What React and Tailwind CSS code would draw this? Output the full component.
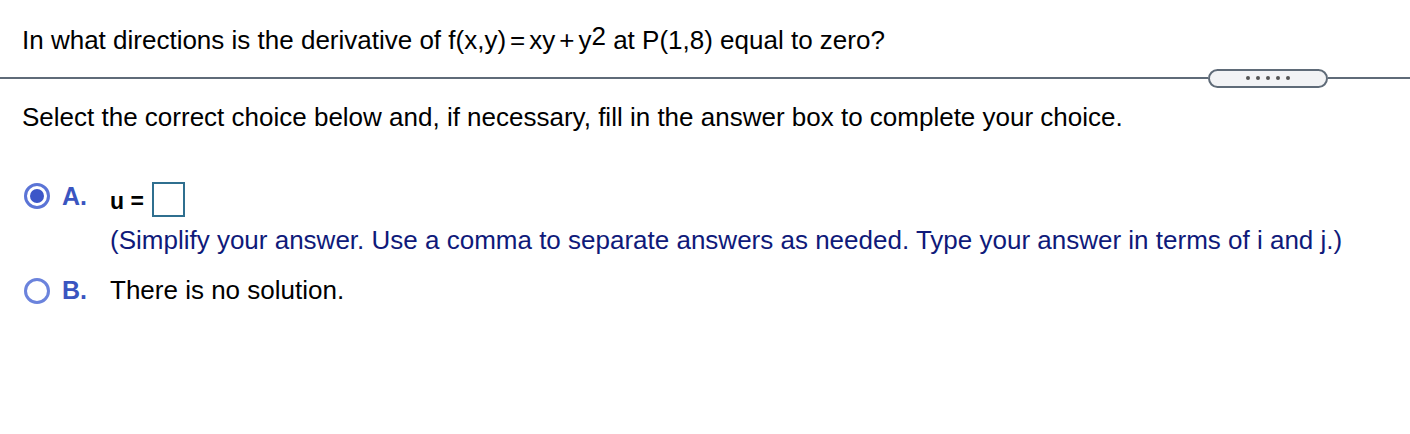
export default function App() {
  const font = { fontFamily: '"Liberation Sans", Arial, sans-serif' };
  return (
    <div className="w-[1410px] h-[434px] bg-white text-black overflow-hidden" style={font}>
      <div className="pl-[22px] pt-[25px] h-[68px] text-[26px] leading-[30px]">
        In what directions is the derivative of f(x,y)<span className="mx-[4px]">=</span>xy<span className="mx-[4px]">+</span>y<sup className="text-[26px] relative top-[-4px]">2</sup> at P(1,8) equal to zero?
      </div>
      <div className="flex items-center h-[20px]">
        <div className="flex-1 h-[2px] bg-[#5f6b78]" />
        <div className="w-[120px] h-[19px] rounded-full border-2 border-[#5f6b78] bg-[#f2f3f5] flex items-center justify-center gap-[6px]">
          <span className="w-[4px] h-[4px] rounded-full bg-[#555]" />
          <span className="w-[4px] h-[4px] rounded-full bg-[#555]" />
          <span className="w-[4px] h-[4px] rounded-full bg-[#555]" />
          <span className="w-[4px] h-[4px] rounded-full bg-[#555]" />
          <span className="w-[4px] h-[4px] rounded-full bg-[#555]" />
        </div>
        <div className="w-[82px] h-[2px] bg-[#5f6b78]" />
      </div>
      <div className="pl-[22px] mt-[14px] text-[26px] leading-[30px]">
        Select the correct choice below and, if necessary, fill in the answer box to complete your choice.
      </div>
      <div className="pl-[24px] mt-[51px] flex items-start">
        <div className="w-[26px] h-[26px] rounded-full border-[3px] border-[#5b74d6] flex items-center justify-center">
          <div className="w-[14px] h-[14px] rounded-full bg-[#3c56c8]" />
        </div>
        <div className="ml-[12px] w-[48px] text-[25px] font-bold text-[#3a55c0] leading-[26px]">A.</div>
        <div>
          <div className="flex items-center h-[35px] mt-[-1px]">
            <span className="text-[23px] font-bold pt-[4px]">u =</span>
            <span className="ml-[8px] w-[33px] h-[35px] border-2 border-[#2f6f8f]" />
          </div>
          <div className="text-[26px] text-[#0f1a7a] leading-[30px] mt-[8px]">
            (Simplify your answer. Use a comma to separate answers as needed. Type your answer in terms of i and j.)
          </div>
        </div>
      </div>
      <div className="pl-[24px] mt-[16px] flex items-center">
        <div className="w-[26px] h-[26px] rounded-full border-[3px] border-[#6b83dc]" />
        <div className="ml-[12px] w-[48px] text-[25px] font-bold text-[#3a55c0]">B.</div>
        <div className="text-[26px]">There is no solution.</div>
      </div>
    </div>
  );
}
